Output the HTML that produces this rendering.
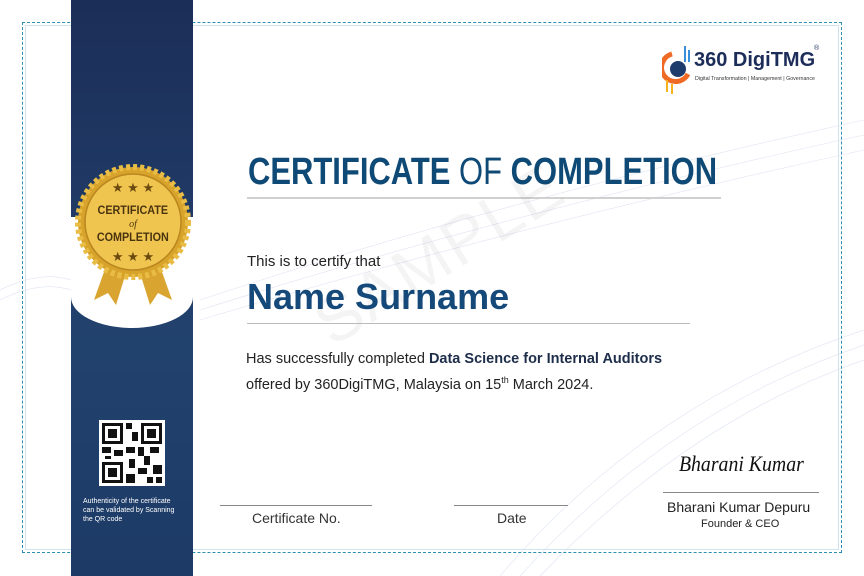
<!DOCTYPE html>
<html><head><meta charset="utf-8"><style>
*{margin:0;padding:0;box-sizing:border-box}
body{width:864px;height:576px;position:relative;overflow:hidden;background:#fff;font-family:"Liberation Sans",sans-serif}
.abs{position:absolute}
.border{left:22px;top:22px;width:820px;height:531px;border:1px dashed #2a8fb0}
.border2{left:25px;top:25px;width:814px;height:525px;border:1px solid #cfe3ec}
.side{left:71px;top:0;width:122px;height:576px;background:linear-gradient(#1b2e58,#22426e 60%,#1d3a66);overflow:hidden}
.t{color:#0e4a75;white-space:nowrap}
</style></head><body>
<svg class="abs" style="left:0;top:0" width="864" height="576">
<g fill="none" stroke="#dfe4f2" stroke-width="0.6">
<path d="M200 300 Q500 200 864 120"/><path d="M200 310 Q500 215 864 135"/><path d="M200 320 Q500 230 864 150"/>
<path d="M500 576 Q650 400 864 330"/><path d="M520 576 Q670 410 864 345"/><path d="M540 576 Q690 420 864 360"/>
<path d="M0 290 Q40 270 71 280"/><path d="M0 300 Q40 280 71 290"/>
</g>
</svg>
<div class="abs border"></div>
<div class="abs border2"></div>
<div class="abs side">
<div class="abs" style="left:0;top:217px;width:122px;height:111px;background:#fff;border-radius:0 0 50% 50%/0 0 31px 31px"></div>
</div>
<!-- seal -->
<svg class="abs" style="left:68px;top:160px" width="130" height="150" viewBox="0 0 130 150">
<polygon points="42,95 26,140 40,133 48,145 62,100" fill="#d9a530"/>
<polygon points="68,100 82,145 90,133 104,140 88,95" fill="#d9a530"/>
<circle cx="65" cy="62" r="55" fill="#d8a32a" stroke="#e9bd45" stroke-width="6" stroke-dasharray="4 3"/>
<circle cx="65" cy="62" r="48" fill="#f0c54f" stroke="#b98620" stroke-width="1.5"/>
<text x="65" y="32" text-anchor="middle" font-size="13" fill="#6b4a10">★ ★ ★</text>
<text x="65" y="54" text-anchor="middle" font-size="12" font-weight="bold" fill="#4a3410" transform="scale(0.9,1) translate(7,0)">CERTIFICATE</text>
<text x="65" y="67" text-anchor="middle" font-size="10" font-style="italic" font-family="Liberation Serif" fill="#4a3410">of</text>
<text x="65" y="81" text-anchor="middle" font-size="12" font-weight="bold" fill="#4a3410" transform="scale(0.9,1) translate(7,0)">COMPLETION</text>
<text x="65" y="101" text-anchor="middle" font-size="13" fill="#6b4a10">★ ★ ★</text>
</svg>
<!-- QR -->
<svg class="abs" style="left:99px;top:420px" width="66" height="66" viewBox="0 0 22 22">
<rect width="22" height="22" fill="#fff"/>
<g fill="#111">
<rect x="1" y="1" width="7" height="7"/><rect x="14" y="1" width="7" height="7"/><rect x="1" y="14" width="7" height="7"/>
</g>
<g fill="#fff"><rect x="2" y="2" width="5" height="5"/><rect x="15" y="2" width="5" height="5"/><rect x="2" y="15" width="5" height="5"/></g>
<g fill="#111"><rect x="3" y="3" width="3" height="3"/><rect x="16" y="3" width="3" height="3"/><rect x="3" y="16" width="3" height="3"/>
<rect x="9" y="1" width="2" height="2"/><rect x="11" y="4" width="2" height="3"/><rect x="9" y="9" width="3" height="2"/><rect x="13" y="9" width="2" height="3"/><rect x="1" y="9" width="3" height="2"/><rect x="5" y="10" width="3" height="2"/><rect x="17" y="9" width="3" height="2"/><rect x="15" y="12" width="2" height="3"/><rect x="10" y="13" width="2" height="3"/><rect x="13" y="16" width="3" height="2"/><rect x="18" y="15" width="3" height="3"/><rect x="9" y="18" width="3" height="3"/><rect x="16" y="19" width="2" height="2"/><rect x="19" y="19" width="2" height="2"/><rect x="2" y="12" width="2" height="1"/></g>
</svg>
<div class="abs" style="left:83px;top:497px;font-size:7px;line-height:9px;color:#fff;white-space:nowrap">Authenticity of the certificate<br>can be validated by Scanning<br>the QR code</div>
<!-- logo -->
<svg class="abs" style="left:662px;top:44px" width="30" height="52" viewBox="0 0 30 52">
<path d="M10 10 A14 14 0 1 0 26 30" fill="none" stroke="#ef6a24" stroke-width="5"/>
<circle cx="16" cy="25" r="8" fill="#1d3b6b"/>
<rect x="22" y="2" width="2" height="16" fill="#3a8fd8"/><rect x="26" y="6" width="2" height="12" fill="#3a8fd8"/>
<rect x="4" y="36" width="2" height="12" fill="#f6b31b"/><rect x="9" y="40" width="2" height="10" fill="#f6b31b"/>
</svg>
<div class="abs" style="left:694px;top:49px;font-size:20px;font-weight:bold;color:#1d2d5a;white-space:nowrap">360 DigiTMG</div>
<div class="abs" style="left:814px;top:45px;font-size:7px;color:#1d2d5a">®</div>
<div class="abs" style="left:695px;top:76px;font-size:5.3px;color:#333;white-space:nowrap">Digital Transformation | Management | Governance</div>
<!-- title -->
<div class="abs t" style="left:248px;top:151px;font-size:38px;font-weight:bold;transform:scaleX(0.815);transform-origin:left">CERTIFICATE <span style="font-weight:normal">OF</span> COMPLETION</div>
<div class="abs" style="left:247px;top:197px;width:474px;height:2px;background:#d0d0d0"></div>
<div class="abs" style="left:320px;top:290px;font-size:66px;color:rgba(0,0,0,0.045);transform:rotate(-32deg);transform-origin:left;letter-spacing:2px">SAMPLE</div>
<div class="abs" style="left:247px;top:253px;font-size:15px;color:#222">This is to certify that</div>
<div class="abs t" style="left:247px;top:276px;font-size:36px;font-weight:bold;color:#15497a">Name Surname</div>
<div class="abs" style="left:247px;top:323px;width:443px;height:1px;background:#bbb"></div>
<div class="abs" style="left:246px;top:351px;font-size:14.5px;color:#222;white-space:nowrap">Has successfully completed <b style="color:#1d2d4a">Data Science for Internal Auditors</b></div>
<div class="abs" style="left:246px;top:375px;font-size:14.5px;color:#222;white-space:nowrap">offered by 360DigiTMG, Malaysia on 15<sup style="font-size:9px">th</sup> March 2024.</div>
<!-- sig -->
<div class="abs" style="left:672px;top:451px;font-family:'Liberation Serif';font-style:italic;font-size:22px;color:#111;transform:scaleX(0.9)">Bharani Kumar</div>
<div class="abs" style="left:663px;top:492px;width:156px;height:1px;background:#888"></div>
<div class="abs" style="left:667px;top:499px;font-size:14px;color:#222;white-space:nowrap">Bharani Kumar Depuru</div>
<div class="abs" style="left:701px;top:518px;font-size:11px;color:#222;white-space:nowrap">Founder &amp; CEO</div>
<div class="abs" style="left:220px;top:505px;width:152px;height:1px;background:#888"></div>
<div class="abs" style="left:252px;top:510px;font-size:14px;color:#333">Certificate No.</div>
<div class="abs" style="left:454px;top:505px;width:114px;height:1px;background:#888"></div>
<div class="abs" style="left:497px;top:510px;font-size:14px;color:#333">Date</div>
</body></html>
